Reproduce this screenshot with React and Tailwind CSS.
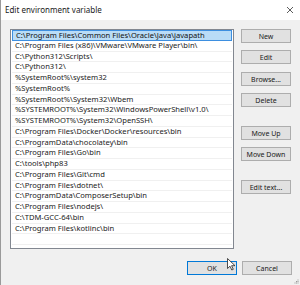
import React from "react";

const paths = [
  "C:\\Program Files\\Common Files\\Oracle\\Java\\javapath",
  "C:\\Program Files (x86)\\VMware\\VMware Player\\bin\\",
  "C:\\Python312\\Scripts\\",
  "C:\\Python312\\",
  "%SystemRoot%\\system32",
  "%SystemRoot%",
  "%SystemRoot%\\System32\\Wbem",
  "%SYSTEMROOT%\\System32\\WindowsPowerShell\\v1.0\\",
  "%SYSTEMROOT%\\System32\\OpenSSH\\",
  "C:\\Program Files\\Docker\\Docker\\resources\\bin",
  "C:\\ProgramData\\chocolatey\\bin",
  "C:\\Program Files\\Go\\bin",
  "C:\\tools\\php83",
  "C:\\Program Files\\Git\\cmd",
  "C:\\Program Files\\dotnet\\",
  "C:\\ProgramData\\ComposerSetup\\bin",
  "C:\\Program Files\\nodejs\\",
  "C:\\TDM-GCC-64\\bin",
  "C:\\Program Files\\kotlinc\\bin",
  "",
  "",
];

const Button = ({ children, className = "", primary }) => (
  <button
    className={`w-[50px] h-[14px] flex items-center justify-center text-[7px] leading-none text-[#1a1a1a] bg-[#e1e1e1] border ${
      primary ? "border-[#0078d7]" : "border-[#adadad]"
    } ${className}`}
  >
    {children}
  </button>
);

const App = () => {
  return (
    <div
      className="relative w-[300px] h-[285px] bg-[#f0f0f0] border-l border-[#9a9a9a] overflow-hidden"
      style={{ fontFamily: '"Noto Sans", "Open Sans", sans-serif' }}
    >
      <div className="h-[20px] bg-white flex items-center justify-between pl-[4px] pr-[6px]">
        <span className="text-[8px] text-[#1a1a1a]">Edit environment variable</span>
        <svg width="8" height="8" viewBox="0 0 8 8">
          <path d="M1 1L7 7M7 1L1 7" stroke="#333" strokeWidth="0.8" />
        </svg>
      </div>

      <div className="flex pt-[9px] pl-[9px]">
        <div className="w-[224px] h-[220px] bg-white border border-[#828790] overflow-hidden px-[1px]">
          {paths.map((p, i) => (
            <div
              key={i}
              className={`h-[10.75px] flex items-center pl-[3px] text-[7.6px] leading-none whitespace-nowrap border-b ${
                i === 0
                  ? "bg-[#b9dcf7] border border-[#3d8fe0] text-[#111]"
                  : "border-[#f0f0f0] text-[#222]"
              }`}
            >
              {p}
            </div>
          ))}
        </div>

        <div className="flex flex-col ml-[7px]">
          <Button>New</Button>
          <Button className="mt-[7px]">Edit</Button>
          <Button className="mt-[8px]">Browse...</Button>
          <Button className="mt-[7px]">Delete</Button>
          <Button className="mt-[19px]">Move Up</Button>
          <Button className="mt-[7px]">Move Down</Button>
          <Button className="mt-[19px]">Edit text...</Button>
        </div>
      </div>

      <div className="flex justify-end gap-[5px] pr-[8px] mt-[12px]">
        <Button primary>OK</Button>
        <Button>Cancel</Button>
      </div>

      {/* mouse pointer */}
      <svg className="absolute left-[226px] top-[258px]" width="9" height="13" viewBox="0 0 9 13">
        <path d="M0.5 0.5L0.5 10.5L3 8.2L4.8 12L6.3 11.3L4.6 7.7L8 7.7Z" fill="white" stroke="#222" strokeWidth="0.8" />
      </svg>

      {/* resize grip */}
      <svg className="absolute right-[1px] bottom-[1px]" width="5" height="5" viewBox="0 0 5 5">
        <rect x="3.5" y="0.5" width="1" height="1" fill="#999" />
        <rect x="2" y="2" width="1" height="1" fill="#999" />
        <rect x="3.5" y="2" width="1" height="1" fill="#999" />
        <rect x="0.5" y="3.5" width="1" height="1" fill="#999" />
        <rect x="2" y="3.5" width="1" height="1" fill="#999" />
        <rect x="3.5" y="3.5" width="1" height="1" fill="#999" />
      </svg>
    </div>
  );
};

export default App;
